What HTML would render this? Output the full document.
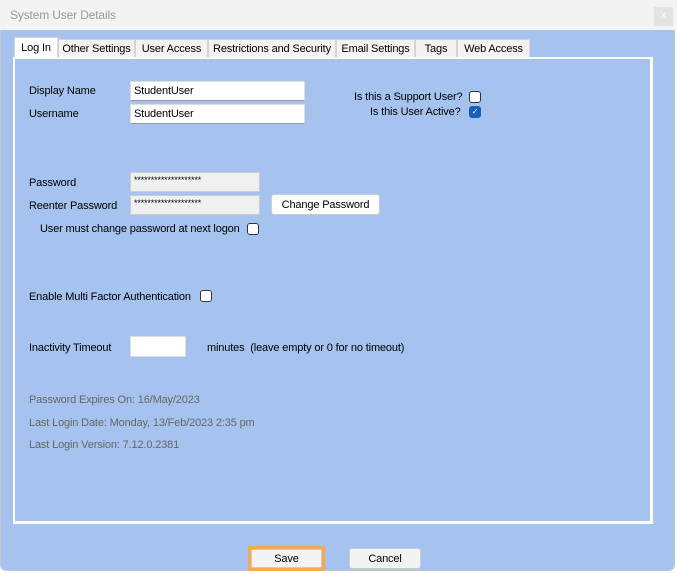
<!DOCTYPE html>
<html><head><style>
body{margin:0;width:677px;height:573px;background:#fff;font-family:"Liberation Sans",sans-serif;font-size:11px;letter-spacing:-0.15px;position:relative;overflow:hidden}
.a{position:absolute;white-space:nowrap}
.win{left:0;top:0;width:675px;height:571px;background:#a5c3ee;border:1px solid #c8c8c8;border-radius:0 0 6px 6px;box-sizing:border-box}
.title{left:0;top:0;width:677px;height:30px;background:#f3f3f3}
.tab{top:39px;height:18px;background:#f3f3f3;border:1px solid #d4d4d4;border-bottom:none;box-sizing:border-box;text-align:center;line-height:18px;color:#000}
.panel{left:13px;top:57px;width:640px;height:467px;border:2px solid #fff;box-sizing:border-box;border-right-width:3px;border-bottom-width:3px}
.in{height:20px;background:#fff;border:1px solid #ddd;border-bottom:1px solid #999;box-sizing:border-box;padding-left:3px;line-height:19px}
.pw{background:#f0f0f0;border:1px solid #ccc;font-size:9px;line-height:14px}
.cb{width:12px;height:12px;border:1px solid #333;border-radius:3px;background:#fff;box-sizing:border-box}
.btn{background:#fdfdfd;border:1px solid #ccc;border-radius:3px;box-sizing:border-box;text-align:center}
.g{color:#666}
</style></head><body>
<div class="a win"></div>
<div class="a title"></div>
<div class="a" style="left:10px;top:8px;font-size:12px;color:#999">System User Details</div>
<div class="a" style="left:654px;top:7px;width:19px;height:19px;background:#e3e3e3;color:#fff;text-align:center;font-size:10px;line-height:18px">x</div>
<div class="a tab" style="left:14px;top:37px;width:44px;height:21px;background:#fff;line-height:20px">Log In</div>
<div class="a tab" style="left:58px;width:77px">Other Settings</div>
<div class="a tab" style="left:135px;width:73px">User Access</div>
<div class="a tab" style="left:208px;width:128px">Restrictions and Security</div>
<div class="a tab" style="left:336px;width:79px">Email Settings</div>
<div class="a tab" style="left:415px;width:42px">Tags</div>
<div class="a tab" style="left:457px;width:73px">Web Access</div>
<div class="a panel"></div>
<div class="a" style="left:29px;top:85px">Display Name</div>
<div class="a" style="left:29px;top:108px">Username</div>
<div class="a in" style="left:130px;top:81px;width:175px">StudentUser</div>
<div class="a in" style="left:130px;top:104px;width:175px">StudentUser</div>
<div class="a" style="left:354px;top:91px">Is this a Support User?</div>
<div class="a" style="left:370px;top:106px">Is this User Active?</div>
<div class="a cb" style="left:469px;top:91px"></div>
<div class="a cb" style="left:469px;top:106px;background:#1a5fb4;border-color:#1a5fb4;color:#fff;font-size:8px;line-height:10px;text-align:center">✓</div>
<div class="a" style="left:29px;top:177px">Password</div>
<div class="a" style="left:29px;top:200px">Reenter Password</div>
<div class="a in pw" style="left:130px;top:172px;width:130px;height:20px">********************</div>
<div class="a in pw" style="left:130px;top:195px;width:130px;height:20px">********************</div>
<div class="a btn" style="left:271px;top:194px;width:109px;height:21px;line-height:20px">Change Password</div>
<div class="a" style="left:40px;top:223px">User must change password at next logon</div>
<div class="a cb" style="left:247px;top:223px"></div>
<div class="a" style="left:29px;top:291px">Enable Multi Factor Authentication</div>
<div class="a cb" style="left:200px;top:290px"></div>
<div class="a" style="left:29px;top:342px">Inactivity Timeout</div>
<div class="a in" style="left:130px;top:336px;width:56px;height:21px;border-color:#ddd"></div>
<div class="a" style="left:207px;top:342px">minutes&nbsp; (leave empty or 0 for no timeout)</div>
<div class="a g" style="left:29px;top:394px">Password Expires On: 16/May/2023</div>
<div class="a g" style="left:29px;top:417px">Last Login Date: Monday, 13/Feb/2023 2:35 pm</div>
<div class="a g" style="left:29px;top:439px">Last Login Version: 7.12.0.2381</div>
<div class="a" style="left:248px;top:546px;width:77px;height:25px;background:#fca64e"></div>
<div class="a btn" style="left:251px;top:549px;width:71px;height:19px;line-height:19px;background:#f3f3f3;border-radius:2px">Save</div>
<div class="a btn" style="left:349px;top:548px;width:72px;height:21px;line-height:20px;background:#f3f3f3">Cancel</div>
</body></html>
